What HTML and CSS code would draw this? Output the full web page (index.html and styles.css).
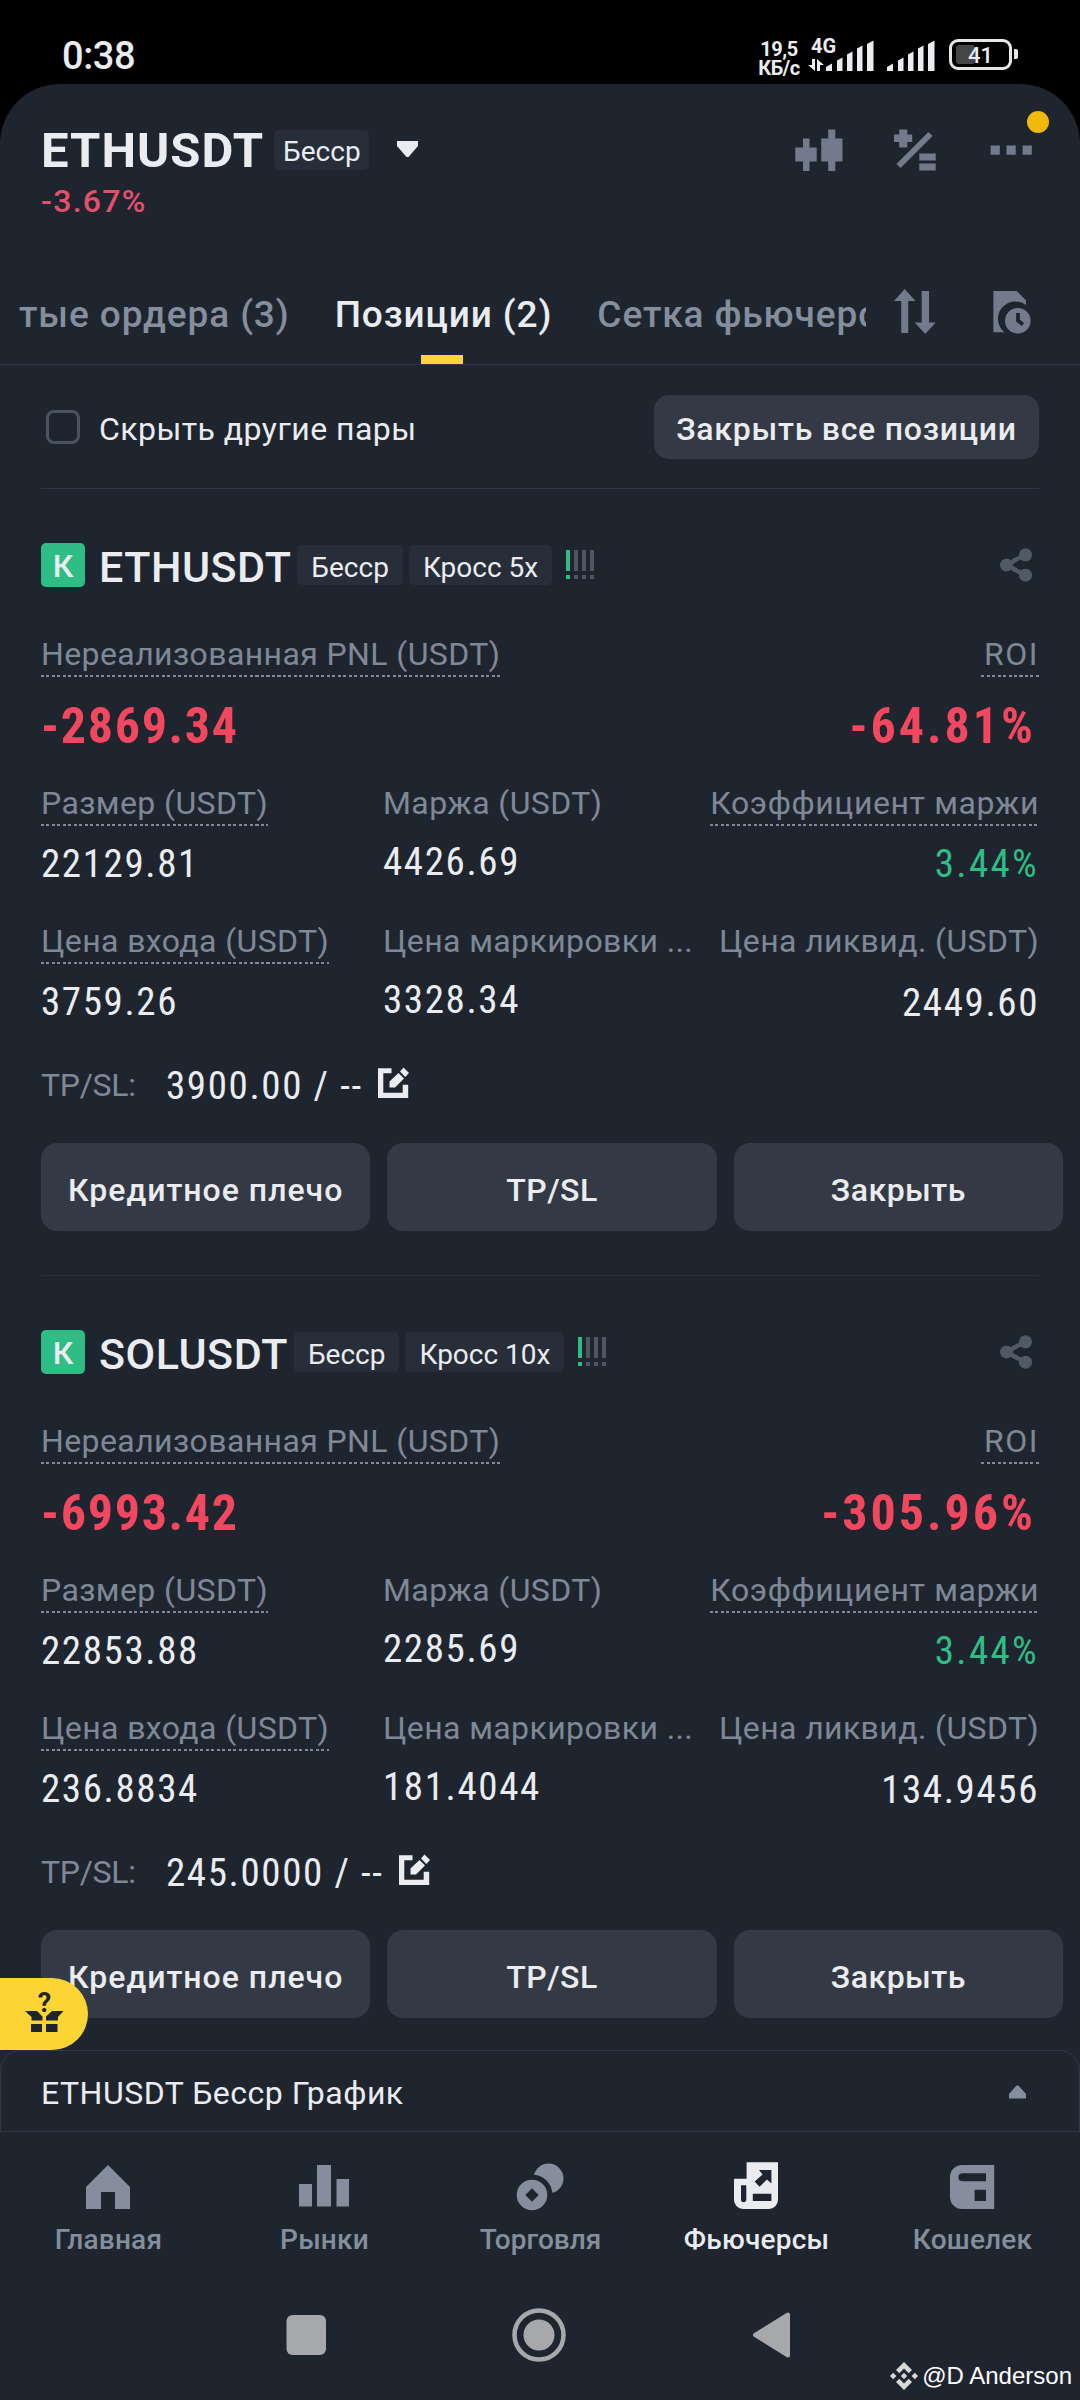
FILE: index.html
```
<!DOCTYPE html>
<html lang="ru">
<head>
  <meta charset="UTF-8">
  <meta name="viewport" content="width=device-width, initial-scale=1.0">
  <title>Фьючерсы - Позиции</title>
  <link rel="stylesheet" href="styles.css">
</head>
<body>
  <!-- icons used more than once -->
  <svg width="0" height="0" class="defs">
    <symbol id="share" viewBox="0 0 32 34">
      <path d="M25.500 6.500L6.500 17L25.500 27.500" fill="none" stroke="currentColor" stroke-width="4.500"/>
      <circle cx="25.500" cy="6.800" r="6.500"/>
      <circle cx="6.500" cy="17" r="6.500"/>
      <circle cx="25.500" cy="27.200" r="6.500"/>
    </symbol>
    <symbol id="edit" viewBox="0 0 32 32">
      <path d="M0 1.300H13.500V6.300H5.300V25.700H24.700V17.700H30.200V31H0z"/>
      <path d="M11.500 20.500V14.500L20.500 6L26 11.500L17 20.500z"/>
      <path d="M22 4.500L25.500 0.500L31 6L27.300 10z"/>
    </symbol>
    <symbol id="risk" viewBox="0 0 28 30">
      <path d="M0 0H4V21H0zM0 25H4V29H0z" fill="#2ebd85"/>
      <path d="M8 0h4v21h-4zM8 25h4v4h-4zM16 0h4v21h-4zM16 25h4v4h-4zM24 0h4v21h-4zM24 25h4v4h-4z" fill="#4f5661"/>
    </symbol>
  </svg>

  <div class="status">
    <span class="time">0:38</span>
    <div class="status-right">
      <div class="speed"><span>19,5</span><span>КБ/с</span></div>
      <div class="mobile">
        <span class="net">4G</span>
        <svg width="66" height="32" viewBox="0 0 66 32">
          <path d="M4 19V25H0L7 31V19zM9 31V19L16 25H12V31z"/>
          <path d="M18 31V27L24 23.500V31zM29 31V20.500L34.500 17.500V31zM39 31V14.500L44.500 11.500V31zM49 31V8.500L54.500 5.500V31zM59 31V4L65.500 0.500V31z"/>
        </svg>
      </div>
      <svg class="sim2" width="48" height="32" viewBox="0 0 48 32">
        <path d="M0 31V27L6 23.500V31zM11 31V20.500L16.500 17.500V31zM21 31V14.500L26.500 11.500V31zM31 31V8.500L36.500 5.500V31zM41 31V4L47.500 0.500V31z"/>
      </svg>
      <div class="battery"><div class="level"></div><span>41</span></div>
    </div>
  </div>

  <div class="app">
    <header class="header">
      <div class="pair">
        <h1>ETHUSDT</h1>
        <span class="tag">Бессp</span>
        <svg class="caret" width="21" height="16" viewBox="0 0 21 16"><path d="M0 0H21V5L11.500 16H9.500L0 5z"/></svg>
        <div class="tools">
          <svg width="60" height="60" viewBox="0 0 60 60">
            <path d="M14 18.500H20.500V51H14zM6.300 27.500H27.700V41.500H6.300zM39.200 9.500H46.300V51H39.200zM32.200 18.500H53.500V41.500H32.200z"/>
          </svg>
          <svg width="60" height="60" viewBox="0 0 60 60">
            <path d="M9 14.500H27.200V22H9zM14.200 9.500H22.300V27.500H14.200zM34.300 33.500H50.700V40.500H34.300zM34.300 43.500H50.700V50.500H34.300z"/>
            <path d="M13.500 46L45.500 14" fill="none" stroke="currentColor" stroke-width="6"/>
          </svg>
          <svg width="60" height="60" viewBox="0 0 60 60">
            <path d="M9.600 25.500h9.200v9.300h-9.200zM25.500 25.500h9.200v9.300h-9.200zM41.600 25.500h9.200v9.300h-9.200z"/>
          </svg>
          <i class="dot"></i>
        </div>
      </div>
      <div class="change">-3.67%</div>
    </header>

    <div class="tabs">
      <div class="tab-list">
        <a class="tab">тые ордера (3)</a>
        <a class="tab active">Позиции (2)</a>
        <a class="tab">Сетка фьючерсов</a>
      </div>
      <div class="tab-icons">
        <svg width="60" height="60" viewBox="0 0 60 60">
          <path d="M19.700 8L30.500 20H23.200V52H16.200V20H9zM36.700 10H44V41.500H50.700L40.300 53L29.700 41.500H36.700z"/>
        </svg>
        <svg width="60" height="60" viewBox="0 0 60 60">
          <path d="M11.400 10H34.800L44 19.500V24.200A17 17 0 0 0 22.500 51.300H11.400z"/>
          <circle cx="35.800" cy="39.700" r="12.800"/>
          <path d="M36 32V39.500L41 43.500" fill="none" stroke="#1f252f" stroke-width="3.800"/>
        </svg>
      </div>
    </div>

    <div class="filter">
      <span class="checkbox"></span>
      <span class="filter-text">Скрыть другие пары</span>
      <button class="close-all">Закрыть все позиции</button>
    </div>

    <section class="position">
      <div class="title">
        <span class="side">К</span>
        <h2>ETHUSDT</h2>
        <span class="tag">Бессp</span>
        <span class="tag">Кросс 5x</span>
        <svg class="risk" width="28" height="30"><use href="#risk"/></svg>
        <svg class="share" width="32" height="34"><use href="#share"/></svg>
      </div>
      <div class="pnl">
        <div>
          <span class="label hint pnl-label">Нереализованная PNL (USDT)</span>
          <div class="big">-2869.34</div>
        </div>
        <div class="right">
          <span class="label hint roi">ROI</span>
          <div class="big">-64.81%</div>
        </div>
      </div>
      <div class="row">
        <div><span class="label hint">Размер (USDT)</span><div class="value">22129.81</div></div>
        <div><span class="label">Маржа (USDT)</span><div class="value">4426.69</div></div>
        <div class="right"><span class="label hint ratio">Коэффициент маржи</span><div class="value green">3.44%</div></div>
      </div>
      <div class="row">
        <div><span class="label hint">Цена входа (USDT)</span><div class="value">3759.26</div></div>
        <div><span class="label">Цена маркировки ...</span><div class="value">3328.34</div></div>
        <div class="right"><span class="label">Цена ликвид. (USDT)</span><div class="value liq">2449.60</div></div>
      </div>
      <div class="tpsl">
        <span class="label">TP/SL:</span>
        <span class="value">3900.00 / --</span>
        <svg width="32" height="32"><use href="#edit"/></svg>
      </div>
      <div class="actions">
        <button class="lev">Кредитное плечо</button>
        <button>TP/SL</button>
        <button>Закрыть</button>
      </div>
    </section>

    <section class="position last">
      <div class="title">
        <span class="side">К</span>
        <h2>SOLUSDT</h2>
        <span class="tag">Бессp</span>
        <span class="tag">Кросс 10x</span>
        <svg class="risk" width="28" height="30"><use href="#risk"/></svg>
        <svg class="share" width="32" height="34"><use href="#share"/></svg>
      </div>
      <div class="pnl">
        <div>
          <span class="label hint pnl-label">Нереализованная PNL (USDT)</span>
          <div class="big">-6993.42</div>
        </div>
        <div class="right">
          <span class="label hint roi">ROI</span>
          <div class="big">-305.96%</div>
        </div>
      </div>
      <div class="row">
        <div><span class="label hint">Размер (USDT)</span><div class="value">22853.88</div></div>
        <div><span class="label">Маржа (USDT)</span><div class="value">2285.69</div></div>
        <div class="right"><span class="label hint ratio">Коэффициент маржи</span><div class="value green">3.44%</div></div>
      </div>
      <div class="row">
        <div><span class="label hint">Цена входа (USDT)</span><div class="value">236.8834</div></div>
        <div><span class="label">Цена маркировки ...</span><div class="value">181.4044</div></div>
        <div class="right"><span class="label">Цена ликвид. (USDT)</span><div class="value liq">134.9456</div></div>
      </div>
      <div class="tpsl">
        <span class="label">TP/SL:</span>
        <span class="value">245.0000 / --</span>
        <svg width="32" height="32"><use href="#edit"/></svg>
      </div>
      <div class="actions">
        <button class="lev">Кредитное плечо</button>
        <button>TP/SL</button>
        <button>Закрыть</button>
      </div>
    </section>

    <div class="chart-bar">
      <span>ETHUSDT Бессp График</span>
      <svg width="17" height="14" viewBox="0 0 17 14"><path d="M0 13.500V9L7.500 0.500H9.500L17 9V13.500z"/></svg>
    </div>

    <nav class="menu">
      <a>
        <svg width="60" height="60" viewBox="0 0 60 60"><path d="M30 8L52 30V52H37V35H23V52H8V30z"/></svg>
        <span>Главная</span>
      </a>
      <a>
        <svg width="60" height="60" viewBox="0 0 60 60"><path d="M5 27H18V49.500H5zM23 8H37V49.500H23zM42.500 22H55V49.500H42.500z"/></svg>
        <span>Рынки</span>
      </a>
      <a>
        <svg width="60" height="60" viewBox="0 0 60 60">
          <circle cx="38.500" cy="21.500" r="15"/>
          <circle cx="22" cy="38" r="20.500" fill="#1f252f"/>
          <path fill-rule="evenodd" d="M22 22.700A15.300 15.300 0 0 1 22 53.300A15.300 15.300 0 0 1 22 22.700zM22 31.300L15.300 38L22 44.700L28.700 38z"/>
        </svg>
        <span class="trade">Торговля</span>
      </a>
      <a class="active">
        <svg width="60" height="60" viewBox="0 0 60 60">
          <path fill-rule="evenodd" d="M20.600 5.300H52V43A9 9 0 0 1 43 52H17A9 9 0 0 1 8 43V21.700H20.600zM15 28.300V42.500A2.650 2.650 0 0 0 20.300 42.500V28.300zM26.800 36.700V44H45.400V36.700zM33 13L36.500 17.500L28.700 24.500L33.500 29.700L41 22.500L45.400 26.500V13z"/>
        </svg>
        <span>Фьючерсы</span>
      </a>
      <a>
        <svg width="60" height="60" viewBox="0 0 60 60">
          <path fill-rule="evenodd" d="M20 8H52.200V52H20A12 12 0 0 1 8 40V20A12 12 0 0 1 20 8zM20.500 16.200A4 4 0 0 0 20.500 24.300H44V16.200zM32.600 32.700V44H44V32.700z"/>
        </svg>
        <span>Кошелек</span>
      </a>
    </nav>

    <div class="system">
      <svg width="60" height="60" viewBox="0 0 60 60"><rect x="10.500" y="10" width="39.500" height="40" rx="6"/></svg>
      <svg width="60" height="60" viewBox="0 0 60 60">
        <circle cx="30" cy="30" r="24.500" fill="none" stroke="currentColor" stroke-width="4.500"/>
        <circle cx="30" cy="30" r="15.500"/>
      </svg>
      <svg width="60" height="60" viewBox="0 0 60 60"><path d="M13 30L46 9.500V50.500z" stroke="currentColor" stroke-width="4" stroke-linejoin="round"/></svg>
    </div>

    <div class="gift">
      <svg width="40" height="42" viewBox="0 0 40 42">
        <text x="19.500" y="20" text-anchor="middle">?</text>
        <path d="M0 19H12L17.500 24.500V28.500H6.500V25zM38.500 19H27L21 24.500V28.500H33V25zM6 32H17V40H6zM21 32H32.500V40H21z"/>
      </svg>
    </div>
  </div>

  <div class="watermark">
    <svg width="28" height="28" viewBox="0 0 28 28">
      <path d="M14 0L22 8L18.700 11.200L14 6.500L9.300 11.200L6 8zM14 28L22 20L18.700 16.800L14 21.500L9.300 16.800L6 20zM3.200 10.800L6.400 14L3.200 17.200L0 14zM24.800 10.800L28 14L24.800 17.200L21.600 14zM14 10.800L17.200 14L14 17.200L10.800 14z"/>
    </svg>
    <span>@D Anderson</span>
  </div>
</body>
</html>
```
FILE: styles.css
```
body {
  margin: 0;
  background: #000;
  color: #eaecef;
  font-family: Roboto, "Noto Sans", sans-serif;
  position: relative;
  width: 1080px;
  height: 2400px;
  overflow: hidden;
}

svg {
  display: block;
  fill: currentColor;
  flex: none;
}

.defs {
  position: absolute;
}

h1, h2 {
  margin: 0;
}

button {
  border: none;
  padding: 0;
  font-family: inherit;
  color: inherit;
}

/* status bar */
.status {
  height: 84px;
  box-sizing: border-box;
  padding: 28px 62px 0 62px;
  display: flex;
  justify-content: space-between;
}

.time {
  font-size: 38px;
  font-weight: 500;
  line-height: 57px;
  letter-spacing: -0.4px;
}

.status-right {
  display: flex;
  align-items: flex-start;
  padding-top: 12px;
}

.speed {
  font-size: 20px;
  font-weight: 700;
  line-height: 19px;
  display: flex;
  flex-direction: column;
  align-items: center;
  width: 42px;
  margin-right: 8px;
  white-space: nowrap;
  letter-spacing: -0.5px;
}

.mobile {
  position: relative;
}

.net {
  position: absolute;
  top: -6px;
  left: 3px;
  font-size: 20px;
  font-weight: 700;
  line-height: 24px;
}

.sim2 {
  margin-left: 13px;
}

.battery {
  position: relative;
  box-sizing: border-box;
  width: 63px;
  height: 31px;
  margin-left: 14px;
  margin-top: -1px;
  border: 3px solid #e6e6e6;
  border-radius: 9px;
  text-align: center;
  margin-right: 6px;
}

.battery::after {
  content: "";
  position: absolute;
  right: -9px;
  top: 7px;
  width: 4px;
  height: 10px;
  border-radius: 0 2px 2px 0;
  background: #e6e6e6;
}

.battery .level {
  position: absolute;
  left: 4px;
  top: 3px;
  width: 19px;
  height: 19px;
  border-radius: 3px;
  background: #454545;
}

.battery span {
  position: relative;
  font-size: 22px;
  font-weight: 500;
  line-height: 27px;
}

/* header */
.app {
  position: relative;
  background: #1f252f;
  border-radius: 60px 60px 0 0;
}

.header {
  height: 182px;
  box-sizing: border-box;
  padding: 36px 39px 0 41px;
}

.pair {
  display: flex;
  align-items: center;
  height: 60px;
}

.pair h1 {
  font-size: 49px;
  font-weight: 700;
  letter-spacing: 1px;
  line-height: 60px;
  padding-top: 2px;
}

.tag {
  box-sizing: border-box;
  height: 40px;
  padding: 0 14px;
  border-radius: 5px;
  background: #282e39;
  font-size: 28px;
  line-height: 45px;
}

.pair .tag {
  margin-left: 10px;
  padding: 0 8px 0 9px;
  line-height: 44px;
}

.caret {
  margin-left: 28px;
  margin-top: -3px;
}

.tools {
  position: relative;
  display: flex;
  gap: 36px;
  margin-left: auto;
  color: #727a8b;
}

.dot {
  position: absolute;
  right: -8px;
  top: -9px;
  width: 22px;
  height: 22px;
  border-radius: 50%;
  background: #f0b90b;
}

.change {
  color: #e2506a;
  font-size: 32px;
  font-weight: 500;
  line-height: 42px;
  letter-spacing: 1.3px;
}

/* tabs */
.tabs {
  display: flex;
  height: 98px;
  border-bottom: 1px solid #313843;
}

.tab-list {
  display: flex;
  gap: 45px;
  width: 866px;
  padding-left: 19px;
  box-sizing: border-box;
  overflow: hidden;
}

.tab {
  position: relative;
  flex: none;
  font-size: 37px;
  font-weight: 500;
  line-height: 98px;
  letter-spacing: 0.9px;
  color: #848e9c;
}

.tab.active {
  color: #eaecef;
}

.tab.active::after {
  content: "";
  position: absolute;
  left: 50%;
  bottom: 0;
  width: 42px;
  height: 9px;
  margin-left: -22px;
  background: #fcd535;
}

.tab-icons {
  display: flex;
  align-items: center;
  gap: 37px;
  height: 90px;
  margin-left: 19px;
  color: #727a8b;
}

/* filter row */
.filter {
  display: flex;
  align-items: center;
  height: 123px;
  margin: 0 41px;
  border-bottom: 1px solid #313843;
}

.checkbox {
  box-sizing: border-box;
  width: 34px;
  height: 34px;
  margin-left: 5px;
  border: 3px solid #4a5260;
  border-radius: 8px;
}

.filter-text {
  margin-left: 19px;
  font-size: 32px;
  letter-spacing: 0.45px;
  padding-top: 4px;
}

.close-all {
  width: 385px;
  height: 64px;
  margin-left: auto;
  padding-top: 5px;
  border-radius: 15px;
  background: #343a45;
  font-size: 32px;
  font-weight: 500;
  letter-spacing: 0.75px;
}

/* positions */
.position {
  padding: 54px 0 44px;
  margin: 0 41px;
  border-bottom: 1px solid #282e38;
}

.position.last {
  padding-bottom: 32px;
  border-bottom: none;
}

.title {
  display: flex;
  align-items: center;
  height: 44px;
}

.side {
  width: 44px;
  height: 44px;
  border-radius: 5px;
  background: #2ebd85;
  font-size: 32px;
  font-weight: 500;
  line-height: 46px;
  text-align: center;
}

.title h2 {
  margin-left: 14px;
  font-size: 43px;
  font-weight: 500;
  line-height: 44px;
  letter-spacing: 0.5px;
  padding-top: 4px;
}

.title .tag {
  margin-left: 6px;
}

.risk {
  margin-left: 14px;
}

.share {
  margin-left: auto;
  margin-right: 7px;
  color: #505966;
}

.pnl {
  display: flex;
  justify-content: space-between;
  margin-top: 47px;
}

.label {
  display: inline-block;
  vertical-align: top;
  font-size: 32px;
  line-height: 41px;
  letter-spacing: 0.4px;
  color: #7f8896;
  white-space: nowrap;
}

.label.hint {
  padding-bottom: 2px;
  background: repeating-linear-gradient(to right, #828a97 0 3px, transparent 3px 5.500px) left bottom / 100% 2px no-repeat;
}

.label.ratio {
  letter-spacing: 0.6px;
}

.label.roi {
  letter-spacing: 1.5px;
  padding-left: 3px;
}

.right {
  text-align: right;
}

.big {
  margin-top: 20px;
  font-size: 50px;
  font-weight: 700;
  font-stretch: 75%;
  line-height: 58px;
  letter-spacing: 1.7px;
  margin-bottom: -1px;
  color: #f1475f;
}

.right .big {
  margin-right: 3px;
  letter-spacing: 3px;
}

.row {
  display: grid;
  grid-template-columns: 342px 315px 1fr;
  margin-top: 29px;
}

.row + .row {
  margin-top: 35px;
}

.value {
  margin-top: 15px;
  margin-bottom: -1px;
  font-size: 39px;
  font-stretch: 75%;
  line-height: 46px;
  letter-spacing: 1.6px;
  color: #eaecef;
}

.value.green {
  color: #2ebd85;
  letter-spacing: 2.3px;
}

.value.liq {
  padding-top: 3px;
  margin-bottom: -4px;
}

.tpsl {
  display: flex;
  align-items: center;
  height: 50px;
  margin-top: 36px;
}

.tpsl .label {
  width: 125px;
  letter-spacing: -0.3px;
}

.tpsl .value {
  margin: 2px 15px 0 0;
}

.tpsl svg {
  margin-top: -4px;
}

.actions {
  display: grid;
  grid-template-columns: repeat(3, 1fr);
  gap: 17px;
  margin: 33px -24px 0 0;
}

.actions button {
  height: 88px;
  padding-top: 5px;
  border-radius: 16px;
  background: #343a45;
  font-size: 32px;
  font-weight: 500;
  letter-spacing: 0.5px;
}

.actions .lev {
  letter-spacing: 1px;
}

/* chart bar */
.chart-bar {
  display: flex;
  align-items: center;
  justify-content: space-between;
  box-sizing: border-box;
  height: 82px;
  padding: 3px 53px 0 40px;
  border: 1px solid #313843;
  border-radius: 20px 20px 0 0;
  font-size: 32px;
  letter-spacing: 0.5px;
}

.chart-bar svg {
  color: #848e9c;
  margin-top: -2px;
}

/* bottom menu */
.menu {
  display: grid;
  grid-template-columns: repeat(5, 1fr);
  height: 138px;
  color: #848e9c;
}

.menu a {
  display: flex;
  flex-direction: column;
  align-items: center;
  padding-top: 25px;
}

.menu span {
  margin-top: 5px;
  padding-left: 1px;
  font-size: 28px;
  font-weight: 500;
  line-height: 36px;
  letter-spacing: 0.2px;
}

.menu .trade {
  letter-spacing: 0;
}

.menu .active {
  color: #eaecef;
}

.system {
  display: flex;
  justify-content: center;
  align-items: center;
  gap: 173px;
  height: 130px;
  color: #a6a8ab;
  padding-right: 3px;
}

/* gift button over the left edge */
.gift {
  position: absolute;
  left: 0;
  top: 1894px;
  width: 88px;
  height: 72px;
  border-radius: 0 36px 36px 0;
  background: #fcd535;
  color: #1f252f;
}

.gift svg {
  margin: 14px 0 0 25px;
}

.gift text {
  font-size: 27px;
  font-weight: 700;
}

.watermark {
  position: absolute;
  right: 8px;
  bottom: 8px;
  display: flex;
  align-items: center;
  gap: 4px;
  color: #d9d9d9;
}

.watermark span {
  font: 24px/32px "Liberation Sans", Arial, sans-serif;
  padding-top: 1px;
  color: #fff;
}
```
